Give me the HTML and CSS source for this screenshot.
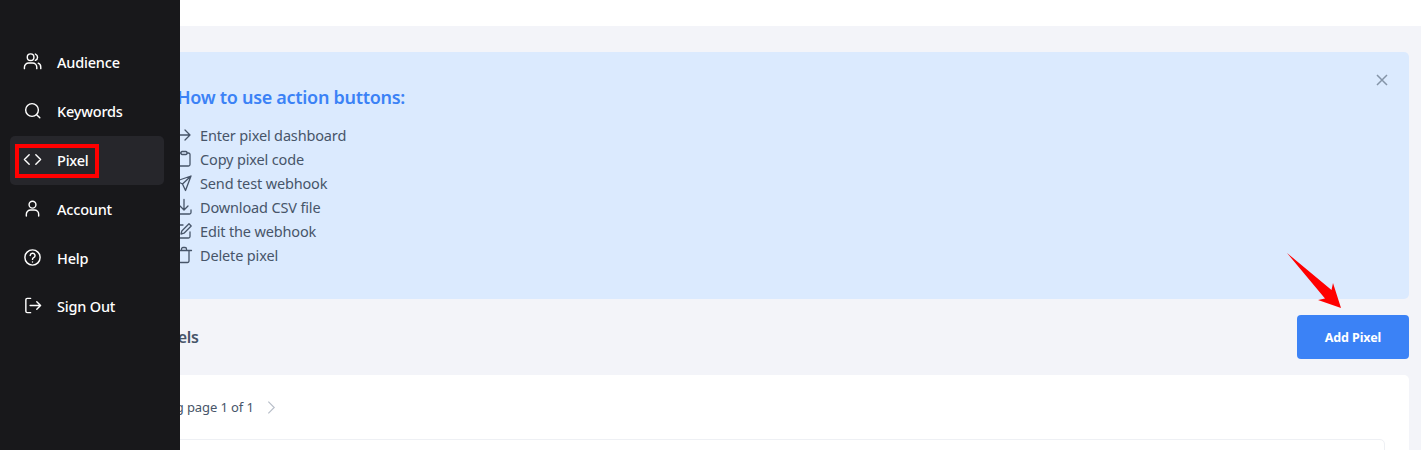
FILE: index.html
```html
<!DOCTYPE html>
<html lang="en">
<head>
<meta charset="utf-8">
<title>Pixels</title>
<link rel="stylesheet" href="styles.css">
</head>
<body>
<div class="page">
  <aside class="sidebar">
    <nav class="nav">
      <a class="nav-item"><svg class="nav-icon" viewBox="0 0 20 20"><circle cx="8" cy="5.500" r="3.500"/><path d="M1.500 17.500v-1.500a4.500 4.500 0 0 1 4.500-4.500h4a4.500 4.500 0 0 1 4.500 4.500v1.500M13 2.200a3.500 3.500 0 0 1 0 6.600M16 11.800a4.500 4.500 0 0 1 2.700 4.200v1.500"/></svg><span>Audience</span></a>
      <a class="nav-item"><svg class="nav-icon" viewBox="0 0 20 20"><circle cx="9.500" cy="9.500" r="6.700"/><path d="M14.400 14.400l3.300 3.300"/></svg><span>Keywords</span></a>
      <a class="nav-item active"><svg class="nav-icon" viewBox="0 0 20 20"><path d="M6.500 5l-5 5 5 5M13.500 5l5 5-5 5"/></svg><span>Pixel</span><span class="highlight"></span></a>
      <a class="nav-item"><svg class="nav-icon" viewBox="0 0 20 20"><circle cx="10" cy="6" r="3.600"/><path d="M3.500 18v-2a4.500 4.500 0 0 1 4.500-4.500h4a4.500 4.500 0 0 1 4.500 4.500v2"/></svg><span>Account</span></a>
      <a class="nav-item"><svg class="nav-icon" viewBox="0 0 20 20"><circle cx="10" cy="10" r="8"/><path d="M7.600 8a2.500 2.500 0 1 1 3.600 2.200c-.8.400-1.200 1-1.200 1.800M10 14.600v.2"/></svg><span>Help</span></a>
      <a class="nav-item nav-item-last"><svg class="nav-icon" viewBox="0 0 20 20"><path d="M8 2.500H4.500A1.500 1.500 0 0 0 3 4v12A1.500 1.500 0 0 0 4.500 17.500H8M7.500 10H18.500M14.500 6l4 4-4 4"/></svg><span>Sign Out</span></a>
    </nav>
  </aside>

  <header class="topbar"></header>

  <main class="main">
    <section class="alert">
      <svg class="alert-close" viewBox="0 0 12 12"><path d="M1 1l10 10M11 1L1 11"/></svg>
      <h2 class="alert-title">How to use action buttons:</h2>
      <ul class="alert-list">
        <li><svg class="li-icon" viewBox="0 0 18 18"><path d="M2 9h13M10 4l5 5-5 5"/></svg>Enter pixel dashboard</li>
        <li><svg class="li-icon" viewBox="0 0 18 18"><path d="M6 3H4.500A1.500 1.500 0 0 0 3 4.500v10A1.500 1.500 0 0 0 4.500 16h9a1.500 1.500 0 0 0 1.500-1.500v-10A1.500 1.500 0 0 0 13.500 3H12"/><rect x="6" y="1.500" width="6" height="3" rx="1"/></svg>Copy pixel code</li>
        <li><svg class="li-icon" viewBox="0 0 18 18"><path d="M16 2L1.500 7l6 3 3 6.500zM16 2L7.500 10"/></svg>Send test webhook</li>
        <li><svg class="li-icon" viewBox="0 0 18 18"><path d="M9 1.500v10M5 8l4 4 4-4M2 12v2.500A1.500 1.500 0 0 0 3.500 16h11a1.500 1.500 0 0 0 1.500-1.500V12"/></svg>Download CSV file</li>
        <li><svg class="li-icon" viewBox="0 0 18 18"><path d="M8 3H3.500A1.500 1.500 0 0 0 2 4.500v10A1.500 1.500 0 0 0 3.500 16h10a1.500 1.500 0 0 0 1.500-1.500V10M14 1.800l2.200 2.200L9 11.200l-3 .8.800-3z"/></svg>Edit the webhook</li>
        <li><svg class="li-icon" viewBox="0 0 18 18"><path d="M1.500 4.500h15M4 4.500V15a1.500 1.500 0 0 0 1.500 1.500h7A1.500 1.500 0 0 0 14 15V4.500M6.500 4.500V3A1.500 1.500 0 0 1 8 1.500h2A1.500 1.500 0 0 1 11.500 3v1.500"/></svg>Delete pixel</li>
      </ul>
    </section>

    <div class="heading-row">
      <h3 class="heading">Your Pixels</h3>
      <button class="add-btn" type="button">Add Pixel</button>
    </div>

    <section class="card">
      <div class="pager">
        <span class="pager-text">Showing page 1 of 1</span>
        <svg class="pager-next" viewBox="0 0 10 16"><path d="M1.500 1.500L8 8l-6.500 6.500"/></svg>
      </div>
      <div class="table-box"></div>
    </section>
  </main>

  <svg class="callout" viewBox="0 0 60 60" aria-hidden="true"><polygon points="1,1 45.500,38 47,31 55,56 32,48 39,46.500"/></svg>
</div>
</body>
</html>
```

FILE: styles.css
```css
* { box-sizing: border-box; }
html, body { margin: 0; padding: 0; height: 100%; }
body {
  font-family: "Noto Sans", "Open Sans", sans-serif;
  background: #f3f4f9;
  color: #475569;
  overflow: hidden;
}
.page { position: relative; width: 1421px; height: 450px; overflow: hidden; }

.sidebar {
  position: absolute;
  z-index: 2;
  top: 0; left: 0; bottom: 0;
  width: 180px;
  background: #18181b;
  padding: 38px 16px 0 10px;
}
.nav { display: flex; flex-direction: column; }
.nav-item {
  position: relative;
  display: flex;
  align-items: center;
  height: 49px;
  padding-left: 13px;
  padding-bottom: 2px;
  color: #fff;
  font-size: 14.5px;
  font-weight: 500;
  letter-spacing: -0.2px;
  border-radius: 5px;
}
.nav-item-last { padding-bottom: 4px; }
.nav-item.active { background: #26262b; }
.nav-icon {
  width: 19px; height: 19px;
  margin-right: 15px;
  fill: none;
  stroke: #fff;
  stroke-width: 1.500;
  stroke-linecap: round;
  stroke-linejoin: round;
  flex: none;
}
.highlight {
  position: absolute;
  left: 5px; top: 8px;
  width: 84px; height: 34px;
  border: 4px solid #f00;
}

.topbar { height: 26px; background: #fff; }

.main { padding: 26px 12px 0 108px; }

.alert {
  position: relative;
  height: 247px;
  background: #dbeafe;
  border-radius: 5px;
  padding: 33px 48px 0 70px;
}
.alert-close {
  position: absolute;
  top: 22px; right: 21px;
  width: 12px; height: 12px;
  fill: none;
  stroke: #8595a8;
  stroke-width: 1.500;
}
.alert-title {
  margin: 0 0 14px -1px;
  font-size: 18px;
  line-height: 24px;
  font-weight: 600;
  letter-spacing: -0.3px;
  color: #3b82f6;
}
.alert-list { list-style: none; margin: 0; padding: 0; }
.alert-list li {
  display: flex;
  align-items: center;
  height: 24px;
  font-size: 14.5px;
  letter-spacing: -0.15px;
  color: #475569;
}
.li-icon {
  width: 18px; height: 18px;
  margin-left: -3px;
  margin-right: 7px;
  fill: none;
  stroke: #475569;
  stroke-width: 1.300;
  stroke-linecap: round;
  stroke-linejoin: round;
  flex: none;
}

.heading-row {
  display: flex;
  align-items: center;
  justify-content: space-between;
  margin-top: 16px;
  height: 44px;
  padding-left: 9px;
}
.heading {
  margin: 0;
  font-size: 16px;
  font-weight: 600;
  letter-spacing: -0.3px;
  color: #475569;
}
.add-btn {
  width: 112px; height: 44px;
  border: 0;
  border-radius: 4px;
  background: #3b82f6;
  color: #fff;
  font: 700 12.500px "Noto Sans", sans-serif;
  letter-spacing: -0.1px;
}

.card {
  margin-top: 16px;
  height: 100px;
  background: #fff;
  border-radius: 5px;
  padding: 0 24px;
}
.pager {
  display: flex;
  align-items: center;
  height: 64px;
}
.pager-text { font-size: 13px; letter-spacing: -0.1px; color: #475569; }
.pager-next {
  width: 9px; height: 15px;
  margin-left: 13px;
  fill: none;
  stroke: #b8bfc9;
  stroke-width: 1.300;
}
.table-box {
  height: 40px;
  border: 1px solid #eef0f4;
  border-radius: 5px;
}

.callout {
  position: absolute;
  z-index: 3;
  left: 1286px; top: 252px;
  width: 60px; height: 60px;
}
.callout polygon { fill: #f00; }
```
